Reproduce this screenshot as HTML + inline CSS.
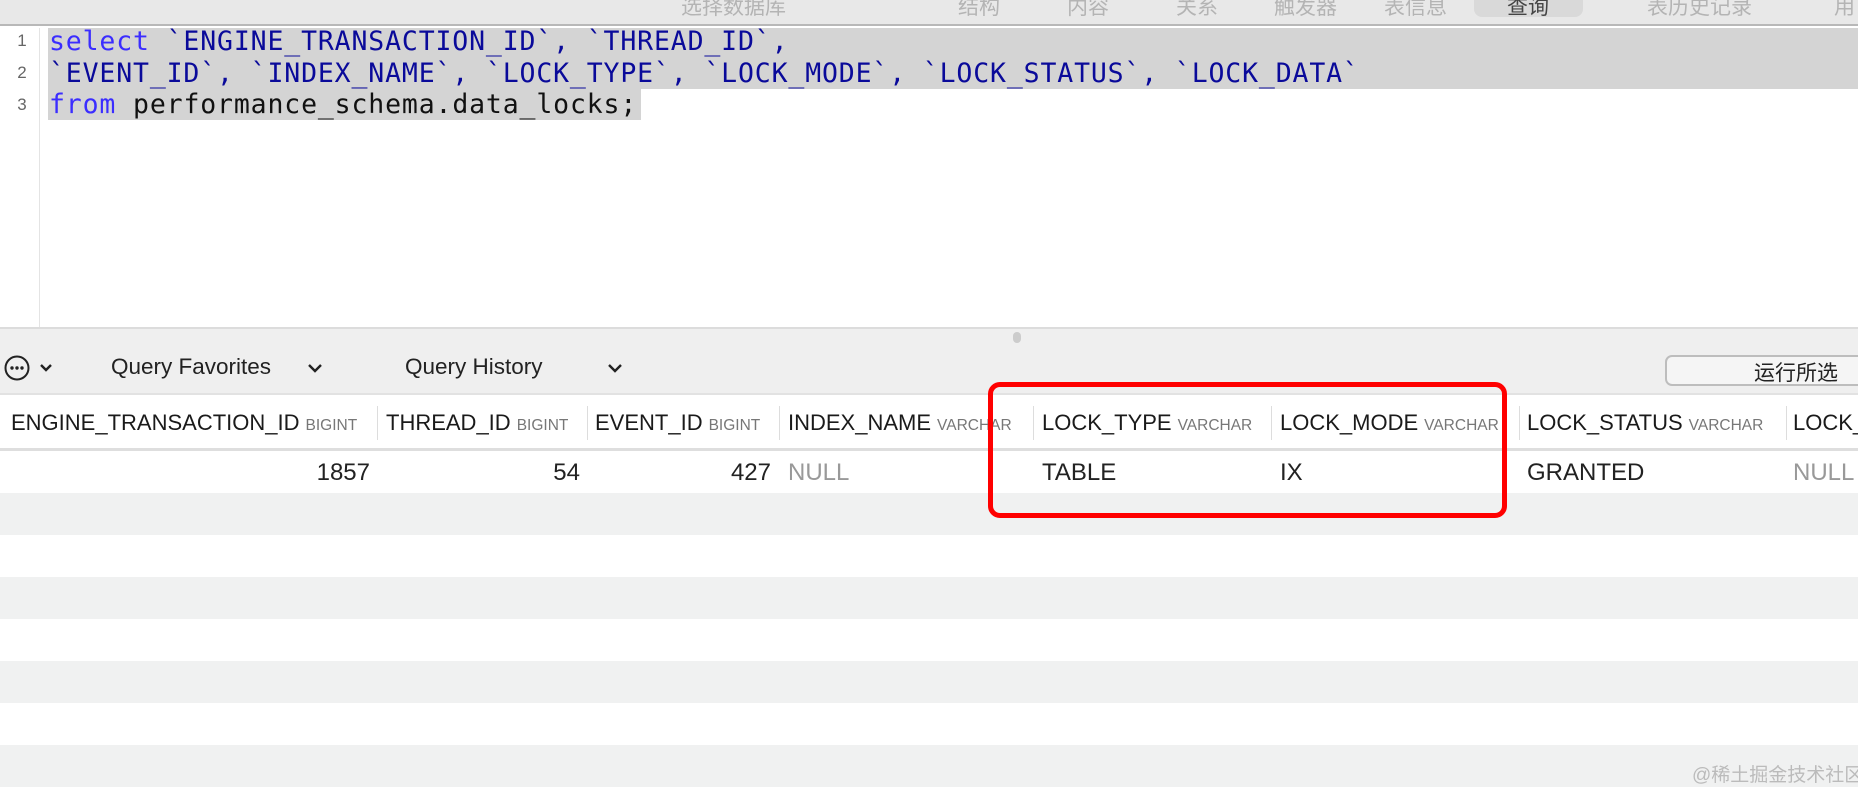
<!DOCTYPE html>
<html><head><meta charset="utf-8">
<style>
*{margin:0;padding:0;box-sizing:border-box}
body{width:1858px;height:790px;overflow:hidden;background:#fff;position:relative;font-family:"Liberation Sans","Noto Sans CJK SC",sans-serif}
.a{position:absolute;white-space:nowrap}
.top{left:0;top:0;width:1858px;height:26px;background:#e8e8e8;border-bottom:2px solid #b8b8b8}
.tab{top:-9px;font-size:21px;color:#b4b4b4}
.code{font-family:"DejaVu Sans Mono","Liberation Mono",monospace;font-size:26.5px;letter-spacing:0.85px;line-height:32px;color:#0a0a9a}
.k{color:#3b2dff}
.p{color:#111}
.ln{font-size:17px;color:#666;left:12px;width:20px;text-align:center}
.hd{top:410px;font-size:22px;color:#1a1a1a}
.hd small{font-size:15.5px;color:#777;margin-left:6px}
.sep{top:406px;width:1px;height:34px;background:#ddd}
.dt{top:459px;font-size:24px;color:#222}
.stripe{left:0;width:1858px;height:42px;background:#f0f1f1}
</style></head><body>
<div class="a top"></div>
<div class="a tab" style="left:681px">选择数据库</div>
<div class="a tab" style="left:958px">结构</div>
<div class="a tab" style="left:1067px">内容</div>
<div class="a tab" style="left:1176px">关系</div>
<div class="a tab" style="left:1274px">触发器</div>
<div class="a tab" style="left:1384px">表信息</div>
<div class="a" style="left:1474px;top:0;width:109px;height:17px;background:#d9d9d9;border-radius:0 0 8px 8px"></div>
<div class="a tab" style="left:1507px;color:#444">查询</div>
<div class="a tab" style="left:1647px">表历史记录</div>
<div class="a tab" style="left:1834px">用</div>

<!-- editor -->
<div class="a" style="left:39px;top:28px;width:1px;height:299px;background:#e4e4e4"></div>
<div class="a" style="left:48px;top:28px;width:1810px;height:61px;background:#d4d4d4"></div>
<div class="a" style="left:48px;top:89px;width:593px;height:31px;background:#d4d4d4"></div>
<div class="a ln" style="top:30px;line-height:22px">1</div>
<div class="a ln" style="top:62px;line-height:22px">2</div>
<div class="a ln" style="top:94px;line-height:22px">3</div>
<div class="a code" style="left:49px;top:26px"><span class="k">select</span> `ENGINE_TRANSACTION_ID`, `THREAD_ID`,</div>
<div class="a code" style="left:49px;top:58px">`EVENT_ID`, `INDEX_NAME`, `LOCK_TYPE`, `LOCK_MODE`, `LOCK_STATUS`, `LOCK_DATA`</div>
<div class="a code" style="left:49px;top:89px"><span class="k">from</span> <span class="p">performance_schema.data_locks;</span></div>

<!-- toolbar -->
<div class="a" style="left:0;top:327px;width:1858px;height:68px;background:#efefef;border-top:2px solid #dcdcdc;border-bottom:2px solid #e2e2e2"></div>
<div class="a" style="left:1013px;top:332px;width:8px;height:11px;border-radius:4px;background:#ccc"></div>
<svg class="a" style="left:3px;top:354px" width="60" height="28" viewBox="0 0 60 28">
<circle cx="14" cy="14" r="11.5" fill="none" stroke="#222" stroke-width="2"/>
<circle cx="9" cy="14" r="1.7" fill="#222"/><circle cx="14" cy="14" r="1.7" fill="#222"/><circle cx="19" cy="14" r="1.7" fill="#222"/>
<path d="M38 11 L43 16 L48 11" fill="none" stroke="#222" stroke-width="2.4"/>
</svg>
<div class="a" style="left:111px;top:354px;font-size:22.5px;color:#222">Query Favorites</div>
<svg class="a" style="left:306px;top:362px" width="18" height="12"><path d="M3 3 L9 9 L15 3" fill="none" stroke="#222" stroke-width="2.4"/></svg>
<div class="a" style="left:405px;top:354px;font-size:22.5px;color:#222">Query History</div>
<svg class="a" style="left:606px;top:362px" width="18" height="12"><path d="M3 3 L9 9 L15 3" fill="none" stroke="#222" stroke-width="2.4"/></svg>
<div class="a" style="left:1665px;top:355px;width:200px;height:31px;border:2px solid #bdbdbd;border-radius:7px;background:#f5f5f5"></div>
<div class="a" style="left:1754px;top:357px;font-size:21px;color:#222">运行所选</div>

<!-- grid -->
<div class="a" style="left:0;top:448px;width:1858px;height:3px;background:#dedede"></div>
<div class="a hd" style="left:11px">ENGINE_TRANSACTION_ID<small>BIGINT</small></div>
<div class="a sep" style="left:377px"></div>
<div class="a hd" style="left:386px">THREAD_ID<small>BIGINT</small></div>
<div class="a sep" style="left:587px"></div>
<div class="a hd" style="left:595px">EVENT_ID<small>BIGINT</small></div>
<div class="a sep" style="left:779px"></div>
<div class="a hd" style="left:788px">INDEX_NAME<small>VARCHAR</small></div>
<div class="a sep" style="left:1033px"></div>
<div class="a hd" style="left:1042px">LOCK_TYPE<small>VARCHAR</small></div>
<div class="a sep" style="left:1271px"></div>
<div class="a hd" style="left:1280px">LOCK_MODE<small>VARCHAR</small></div>
<div class="a sep" style="left:1519px"></div>
<div class="a hd" style="left:1527px">LOCK_STATUS<small>VARCHAR</small></div>
<div class="a sep" style="left:1786px"></div>
<div class="a hd" style="left:1793px">LOCK_DATA</div>

<div class="a dt" style="left:250px;width:120px;text-align:right">1857</div>
<div class="a dt" style="left:480px;width:100px;text-align:right">54</div>
<div class="a dt" style="left:670px;width:101px;text-align:right">427</div>
<div class="a dt" style="left:788px;color:#999">NULL</div>
<div class="a dt" style="left:1042px">TABLE</div>
<div class="a dt" style="left:1280px">IX</div>
<div class="a dt" style="left:1527px">GRANTED</div>
<div class="a dt" style="left:1793px;color:#999">NULL</div>

<div class="a stripe" style="top:493px"></div>
<div class="a stripe" style="top:577px"></div>
<div class="a stripe" style="top:661px"></div>
<div class="a stripe" style="top:745px"></div>

<div class="a" style="left:988px;top:382px;width:519px;height:136px;border:5px solid #f00;border-radius:12px"></div>

<div class="a" style="left:1692px;top:760px;font-size:19px;color:#bbb">@稀土掘金技术社区</div>
</body></html>
